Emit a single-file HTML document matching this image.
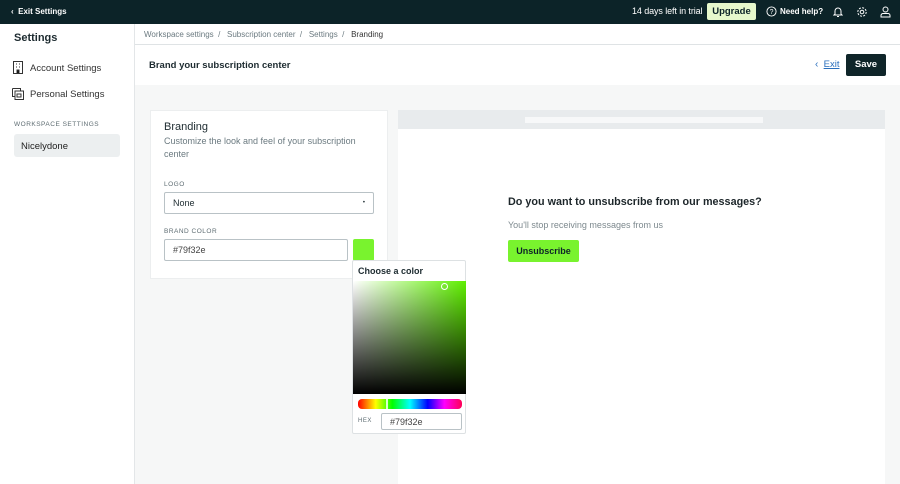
<!DOCTYPE html>
<html><head><meta charset="utf-8"><style>
*{box-sizing:border-box;margin:0;padding:0}
body{width:900px;height:484px;overflow:hidden;font-family:"Liberation Sans",sans-serif;background:#f6f7f7;position:relative;color:#1d2b30}
.abs{position:absolute}
.top{left:0;top:0;width:900px;height:24px;background:#0c2328;color:#fff}
.side{left:0;top:24px;width:135px;height:460px;background:#fff;border-right:1px solid #e3e6e8}
.crumb{left:135px;top:24px;width:765px;height:21px;background:#fff;border-bottom:1px solid #dfe3e5;font-size:8px;color:#6b7a80;padding:6px 9px}
.head{left:135px;top:45px;width:765px;height:40px;background:#fff}
.card{left:150px;top:110px;width:238px;height:169px;background:#fff;border:1px solid #eceeef}
.lbl{font-size:6.5px;letter-spacing:.5px;color:#5e6c72}
.inp{background:#fff;border:1px solid #b9c2c6;border-radius:2px;font-size:9px;padding:0 8px;display:flex;align-items:center}
</style></head><body>
<div class="abs top">
 <div class="abs" style="left:11px;top:7px;font-size:8px;font-weight:bold">‹&nbsp; Exit Settings</div>
 <div class="abs" style="left:632px;top:6px;font-size:9px;letter-spacing:-0.1px;width:72px;white-space:nowrap">14 days left in trial</div>
 <div class="abs" style="left:707px;top:3px;width:49px;height:17px;background:#e6f8cc;border-radius:2px;color:#0c2328;font-size:9.5px;font-weight:bold;text-align:center;line-height:17px">Upgrade</div>
 <svg class="abs" style="left:766px;top:6px" width="11" height="11" viewBox="0 0 12 12"><circle cx="6" cy="6" r="5" fill="none" stroke="#fff" stroke-width="1"/><text x="6" y="8.8" font-size="7.5" fill="#fff" text-anchor="middle" font-family="Liberation Sans">?</text></svg>
 <div class="abs" style="left:780px;top:7px;font-size:8px;font-weight:bold">Need help?</div>
 <svg class="abs" style="left:833px;top:6px" width="10" height="12" viewBox="0 0 10 12"><path d="M2 8V5a3 3 0 016 0v3l1 1H1z M4 10.5h2" fill="none" stroke="#fff" stroke-width="1"/></svg>
 <svg class="abs" style="left:856px;top:6px" width="12" height="12" viewBox="0 0 12 12"><circle cx="6" cy="6" r="1.8" fill="none" stroke="#fff"/><circle cx="6" cy="6" r="4.2" fill="none" stroke="#fff" stroke-dasharray="2 1.3"/></svg>
 <svg class="abs" style="left:880px;top:6px" width="11" height="12" viewBox="0 0 11 12"><circle cx="5.5" cy="3.5" r="2.5" fill="none" stroke="#fff"/><path d="M1 11V9.5a2 2 0 012-2h5a2 2 0 012 2V11z" fill="none" stroke="#fff"/></svg>
</div>
<div class="abs side">
 <div class="abs" style="left:14px;top:8px;font-size:11px;font-weight:bold">Settings</div>
 <svg class="abs" style="left:13px;top:37px" width="10" height="13" viewBox="0 0 10 13"><rect x=".5" y=".5" width="9" height="12" fill="none" stroke="#333"/><path d="M3 3h1M6 3h1M3 6h1M6 6h1M4 12V9h2v3" stroke="#333"/></svg>
 <div class="abs" style="left:30px;top:39px;font-size:9.5px;color:#333">Account Settings</div>
 <svg class="abs" style="left:12px;top:64px" width="12" height="12" viewBox="0 0 12 12"><path d="M.5 .5h8v2M.5.5v8h2" fill="none" stroke="#333"/><rect x="3" y="3" width="8.5" height="8.5" fill="none" stroke="#333"/><rect x="5" y="6" width="4" height="3" fill="none" stroke="#333"/></svg>
 <div class="abs" style="left:30px;top:65px;font-size:9.5px;color:#333">Personal Settings</div>
 <div class="abs lbl" style="left:14px;top:97px">WORKSPACE SETTINGS</div>
 <div class="abs" style="left:14px;top:110px;width:106px;height:23px;background:#eceff0;border-radius:3px;font-size:9.5px;padding:7px 7px;color:#222">Nicelydone</div>
</div>
<div class="abs crumb">Workspace settings &nbsp;/ &nbsp; Subscription center &nbsp;/ &nbsp; Settings &nbsp;/ &nbsp; <span style="color:#333">Branding</span></div>
<div class="abs head">
 <div class="abs" style="left:14px;top:15px;font-size:9.5px;font-weight:bold">Brand your subscription center</div>
 <div class="abs" style="left:680px;top:14px;font-size:9.5px;color:#2a6fbd"><span style="font-size:10px">‹</span>&nbsp; <u>Exit</u></div>
 <div class="abs" style="left:711px;top:9px;width:40px;height:22px;background:#0f2529;border-radius:2px;color:#fff;font-size:9.5px;font-weight:bold;text-align:center;line-height:22px">Save</div>
</div>
<div class="abs card">
 <div class="abs" style="left:13px;top:10px;font-size:11px;font-weight:500">Branding</div>
 <div class="abs" style="left:13px;top:24px;width:205px;font-size:9px;line-height:13px;color:#6b7a80">Customize the look and feel of your subscription center</div>
 <div class="abs lbl" style="left:13px;top:70px">LOGO</div>
 <div class="abs inp" style="left:13px;top:81px;width:210px;height:22px">None<span style="margin-left:auto;font-size:6px">•</span></div>
 <div class="abs lbl" style="left:13px;top:117px">BRAND COLOR</div>
 <div class="abs inp" style="left:13px;top:128px;width:184px;height:22px;color:#444">#79f32e</div>
 <div class="abs" style="left:202px;top:128px;width:21px;height:22px;background:#79f32e;border-radius:2px"></div>
</div>
<div class="abs" style="left:398px;top:110px;width:487px;height:374px;background:#fff">
 <div class="abs" style="left:0;top:0;width:487px;height:19px;background:#e8ebed"></div>
 <div class="abs" style="left:127px;top:7px;width:238px;height:6px;background:#f7f8f9"></div>
 <div class="abs" style="left:110px;top:86px;font-size:10.8px;font-weight:bold;color:#1d262a;white-space:nowrap">Do you want to unsubscribe from our messages?</div>
 <div class="abs" style="left:110px;top:110px;font-size:9px;color:#7d898e">You'll stop receiving messages from us</div>
 <div class="abs" style="left:110px;top:130px;width:71px;height:22px;background:#79f32e;border-radius:2px;font-size:9px;font-weight:bold;text-align:center;line-height:22px;color:#0c2328">Unsubscribe</div>
</div>
<div class="abs" style="left:352px;top:260px;width:114px;height:174px;background:#fff;border:1px solid #dde1e3;border-radius:2px">
 <div class="abs" style="left:5px;top:5px;font-size:9px;font-weight:bold">Choose a color</div>
 <div class="abs" style="left:0;top:20px;width:113px;height:113px;background:linear-gradient(to top,#000,rgba(0,0,0,0)),linear-gradient(to right,#fff,#5fef00)"></div>
 <div class="abs" style="left:88px;top:22px;width:7px;height:7px;border:1px solid #fff;border-radius:50%"></div>
 <div class="abs" style="left:5px;top:138px;width:104px;height:10px;border-radius:4px;background:linear-gradient(to right,#f00,#ff0 17%,#0f0 33%,#0ff 50%,#00f 67%,#f0f 83%,#f05)"></div>
 <div class="abs" style="left:33px;top:137px;width:2px;height:12px;background:#fff;opacity:.8"></div>
 <div class="abs lbl" style="left:5px;top:157px;font-size:6px">HEX</div>
 <div class="abs inp" style="left:28px;top:152px;width:81px;height:17px;color:#444">#79f32e</div>
</div>
</body></html>
